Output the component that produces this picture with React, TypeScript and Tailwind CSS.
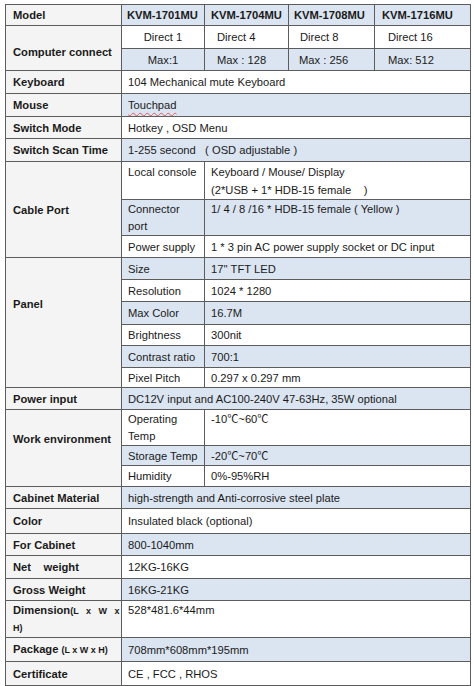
import React from "react";

const BD = "border border-[#5c5c5c]";
const L = `${BD} bg-[#f4f4f4] pl-[7px] pr-[2px] font-bold align-middle`;
const V = `${BD} px-[6px] align-middle`;
const VT = `${BD} px-[6px] align-top pt-[1px]`;
const BL = "bg-[#dbe5f1]";

export default function App() {
  return (
    <div className="bg-white w-[474px] h-[686px] pt-[4px] pl-[5px] text-[#1a1a1a] font-['Liberation_Sans','Noto_Sans_CJK_SC',sans-serif] text-[11.2px] leading-[18px]">
      <table className="table-fixed border-collapse w-[465px] border border-[#3c3c3c]">
        <colgroup>
          <col className="w-[116px]" />
          <col className="w-[83px]" />
          <col className="w-[84px]" />
          <col className="w-[86px]" />
          <col className="w-[96px]" />
        </colgroup>
        <tbody>
          <tr className="h-[21px]">
            <td className={L}>Model</td>
            <td className={`${V} ${BL} font-bold pl-[5px]`}>KVM-1701MU</td>
            <td className={`${V} ${BL} font-bold pl-[6px]`}>KVM-1704MU</td>
            <td className={`${V} ${BL} font-bold pl-[5px]`}>KVM-1708MU</td>
            <td className={`${V} ${BL} font-bold pl-[7px]`}>KVM-1716MU</td>
          </tr>
          <tr className="h-[23px]">
            <td className={`${L} pt-[8px]`} rowSpan={2}>Computer connect</td>
            <td className={`${V} text-center`}>Direct 1</td>
            <td className={`${V} pl-[12px]`}>Direct 4</td>
            <td className={`${V} pl-[11px]`}>Direct 8</td>
            <td className={`${V} pl-[13px]`}>Direct 16</td>
          </tr>
          <tr className="h-[22px]">
            <td className={`${V} ${BL} text-center`}>Max:1</td>
            <td className={`${V} ${BL} pl-[12px]`}>Max : 128</td>
            <td className={`${V} ${BL} pl-[10px]`}>Max : 256</td>
            <td className={`${V} ${BL} pl-[13px]`}>Max: 512</td>
          </tr>
          <tr className="h-[23px]">
            <td className={L}>Keyboard</td>
            <td className={V} colSpan={4}>104 Mechanical mute Keyboard</td>
          </tr>
          <tr className="h-[23px]">
            <td className={L}>Mouse</td>
            <td className={`${V} ${BL}`} colSpan={4}>
              <span className="underline decoration-wavy decoration-[#e05a5a] decoration-1 underline-offset-[3px]">Touchpad</span>
            </td>
          </tr>
          <tr className="h-[22px]">
            <td className={L}>Switch Mode</td>
            <td className={V} colSpan={4}>Hotkey , OSD Menu</td>
          </tr>
          <tr className="h-[23px]">
            <td className={L}>Switch Scan Time</td>
            <td className={`${V} ${BL} whitespace-pre`} colSpan={4}>{"1-255 second   ( OSD adjustable )"}</td>
          </tr>
          <tr className="h-[38px]">
            <td className={L} rowSpan={3}>Cable Port</td>
            <td className={VT}>Local console</td>
            <td className={`${VT} whitespace-pre`} colSpan={3}>
              {"Keyboard / Mouse/ Display"}
              <br />
              {"(2*USB + 1* HDB-15 female    )"}
            </td>
          </tr>
          <tr className="h-[36px]">
            <td className={`${VT} ${BL} leading-[17px]`}>
              Connector
              <br />
              port
            </td>
            <td className={`${VT} ${BL} leading-[17px]`} colSpan={3}>1/ 4 / 8 /16 * HDB-15 female ( Yellow )</td>
          </tr>
          <tr className="h-[22px]">
            <td className={V}>Power supply</td>
            <td className={V} colSpan={3}>1 * 3 pin AC power supply socket or DC input</td>
          </tr>
          <tr className="h-[22px]">
            <td className={`${L} pb-[38px]`} rowSpan={6}>Panel</td>
            <td className={`${V} ${BL}`}>Size</td>
            <td className={`${V} ${BL}`} colSpan={3}>17'' TFT LED</td>
          </tr>
          <tr className="h-[22px]">
            <td className={V}>Resolution</td>
            <td className={V} colSpan={3}>1024 * 1280</td>
          </tr>
          <tr className="h-[23px]">
            <td className={`${V} ${BL}`}>Max Color</td>
            <td className={`${V} ${BL}`} colSpan={3}>16.7M</td>
          </tr>
          <tr className="h-[21px]">
            <td className={V}>Brightness</td>
            <td className={V} colSpan={3}>300nit</td>
          </tr>
          <tr className="h-[22px]">
            <td className={`${V} ${BL}`}>Contrast ratio</td>
            <td className={`${V} ${BL}`} colSpan={3}>700:1</td>
          </tr>
          <tr className="h-[20px]">
            <td className={V}>Pixel Pitch</td>
            <td className={V} colSpan={3}>0.297 x 0.297 mm</td>
          </tr>
          <tr className="h-[22px]">
            <td className={L}>Power input</td>
            <td className={`${V} ${BL}`} colSpan={4}>DC12V input and AC100-240V 47-63Hz, 35W optional</td>
          </tr>
          <tr className="h-[36px]">
            <td className={`${L} pb-[18px]`} rowSpan={3}>Work environment</td>
            <td className={`${VT} leading-[17px]`}>
              Operating
              <br />
              Temp
            </td>
            <td className={`${VT} leading-[17px]`} colSpan={3}>-10℃~60℃</td>
          </tr>
          <tr className="h-[20px]">
            <td className={`${V} ${BL}`}>Storage Temp</td>
            <td className={`${V} ${BL}`} colSpan={3}>-20℃~70℃</td>
          </tr>
          <tr className="h-[21px]">
            <td className={V}>Humidity</td>
            <td className={V} colSpan={3}>0%-95%RH</td>
          </tr>
          <tr className="h-[22px]">
            <td className={L}>Cabinet Material</td>
            <td className={`${V} ${BL}`} colSpan={4}>high-strength and Anti-corrosive steel plate</td>
          </tr>
          <tr className="h-[25px]">
            <td className={L}>Color</td>
            <td className={V} colSpan={4}>Insulated black (optional)</td>
          </tr>
          <tr className="h-[22px]">
            <td className={L}>For Cabinet</td>
            <td className={`${V} ${BL}`} colSpan={4}>800-1040mm</td>
          </tr>
          <tr className="h-[23px]">
            <td className={`${L} whitespace-pre`}>{"Net    weight"}</td>
            <td className={V} colSpan={4}>12KG-16KG</td>
          </tr>
          <tr className="h-[22px]">
            <td className={L}>Gross Weight</td>
            <td className={`${V} ${BL}`} colSpan={4}>16KG-21KG</td>
          </tr>
          <tr className="h-[36px]">
            <td className={`${BD} bg-[#f4f4f4] pl-[7px] pr-[2px] font-bold align-top pt-0 leading-[18px]`}>
              <div className="whitespace-pre">
                Dimension<span className="text-[9px]">{"(L   x   W   x"}</span>
              </div>
              <div className="text-[9px] leading-[17px]">H)</div>
            </td>
            <td className={`${BD} px-[6px] align-top pt-0 leading-[18px]`} colSpan={4}>528*481.6*44mm</td>
          </tr>
          <tr className="h-[24px]">
            <td className={`${L} whitespace-pre`}>
              Package <span className="text-[9px]">(L x W x H)</span>
            </td>
            <td className={`${V} ${BL}`} colSpan={4}>708mm*608mm*195mm</td>
          </tr>
          <tr className="h-[24px]">
            <td className={L}>Certificate</td>
            <td className={V} colSpan={4}>CE , FCC , RHOS</td>
          </tr>
        </tbody>
      </table>
    </div>
  );
}
